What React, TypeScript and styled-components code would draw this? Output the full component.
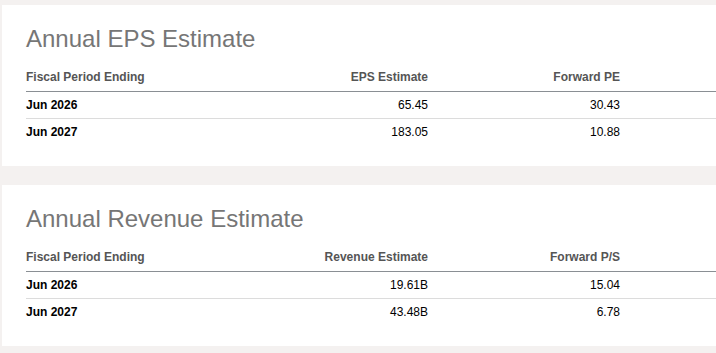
import React from "react";
import styled, { createGlobalStyle } from "styled-components";

type Row = { period: string; estimate: string; forward: string };

type Section = {
  title: string;
  estimateLabel: string;
  forwardLabel: string;
  rows: Row[];
};

const sections: Section[] = [
  {
    title: "Annual EPS Estimate",
    estimateLabel: "EPS Estimate",
    forwardLabel: "Forward PE",
    rows: [
      { period: "Jun 2026", estimate: "65.45", forward: "30.43" },
      { period: "Jun 2027", estimate: "183.05", forward: "10.88" },
    ],
  },
  {
    title: "Annual Revenue Estimate",
    estimateLabel: "Revenue Estimate",
    forwardLabel: "Forward P/S",
    rows: [
      { period: "Jun 2026", estimate: "19.61B", forward: "15.04" },
      { period: "Jun 2027", estimate: "43.48B", forward: "6.78" },
    ],
  },
];

const App: React.FC = () => {
  return (
    <>
      <GlobalStyle />
      <Page>
        {sections.map((section) => (
          <Card key={section.title}>
            <Title>{section.title}</Title>
            <Table>
              <HeadCell>Fiscal Period Ending</HeadCell>
              <HeadCell $right>{section.estimateLabel}</HeadCell>
              <HeadCell $right>{section.forwardLabel}</HeadCell>
              <HeadCell />
              {section.rows.map((row, i) => {
                const last = i === section.rows.length - 1;
                return (
                  <React.Fragment key={row.period}>
                    <Cell $last={last} $bold>
                      {row.period}
                    </Cell>
                    <Cell $last={last} $right>
                      {row.estimate}
                    </Cell>
                    <Cell $last={last} $right>
                      {row.forward}
                    </Cell>
                    <Cell $last={last} />
                  </React.Fragment>
                );
              })}
            </Table>
          </Card>
        ))}
      </Page>
    </>
  );
};

const GlobalStyle = createGlobalStyle`
  html, body {
    margin: 0;
    padding: 0;
    background: #f4f1f0;
    overflow: hidden;
  }
  body {
    font-family: "Liberation Sans", Arial, sans-serif;
  }
`;

const Page = styled.div`
  width: 100vw;
  height: 100vh;
  overflow: hidden;
  padding: 5px 0 0 2px;
  box-sizing: border-box;
  display: flex;
  flex-direction: column;
  gap: 19px;
`;

const Card = styled.section`
  width: 760px;
  flex-shrink: 0;
  background: #fff;
  padding: 22px 24px 20px;
  box-sizing: border-box;
`;

const Title = styled.h2`
  margin: 0 0 13px;
  font-size: 24px;
  line-height: 24px;
  font-weight: 400;
  color: #767676;
`;

const Table = styled.div`
  display: grid;
  grid-template-columns: 210px 192px 192px 1fr;
`;

const HeadCell = styled.div<{ $right?: boolean }>`
  padding: 6px 0 7px;
  line-height: 14px;
  font-size: 12px;
  font-weight: 700;
  color: #555;
  text-align: ${(p) => (p.$right ? "right" : "left")};
  border-bottom: 1px solid #8a8f94;
`;

const Cell = styled.div<{ $right?: boolean; $bold?: boolean; $last?: boolean }>`
  padding: 6px 0;
  line-height: 14px;
  font-size: 12px;
  font-weight: ${(p) => (p.$bold ? 700 : 400)};
  color: #000;
  text-align: ${(p) => (p.$right ? "right" : "left")};
  border-bottom: 1px solid ${(p) => (p.$last ? "transparent" : "#dcdcdc")};
`;

export default App;
